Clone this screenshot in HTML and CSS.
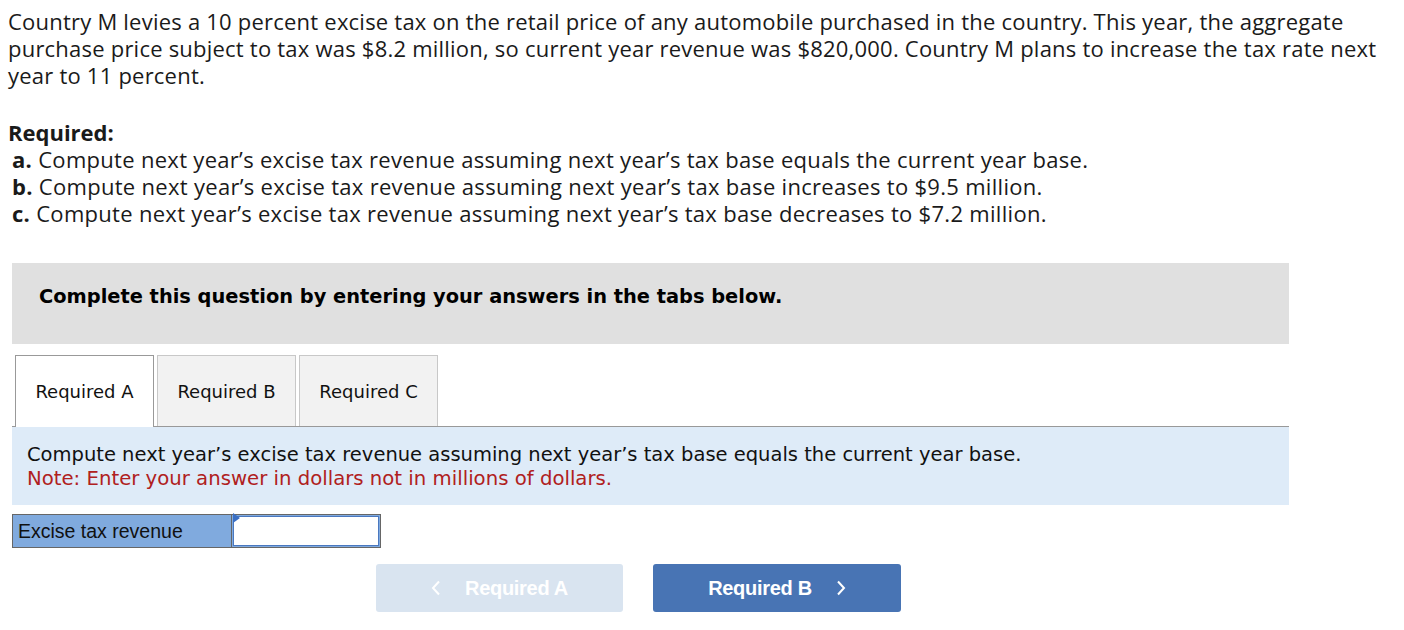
FILE: index.html
```html
<!DOCTYPE html>
<html>
  <head>
    <title>Excise Tax</title>
    <link rel="stylesheet" href="styles.css">
  </head>
  <body>
    <div class="question">
      <p class="intro">
        Country M levies a 10 percent excise tax on the retail price of any automobile purchased in the country. This year, the aggregate purchase price subject to tax was $8.2 million, so current year revenue was $820,000. Country M plans to increase the tax rate next year to 11 percent.
      </p>
      <div class="required">
        <div class="required-title">Required:</div>
        <div class="required-item"><b>a.</b> Compute next year’s excise tax revenue assuming next year’s tax base equals the current year base.</div>
        <div class="required-item"><b>b.</b> Compute next year’s excise tax revenue assuming next year’s tax base increases to $9.5 million.</div>
        <div class="required-item"><b>c.</b> Compute next year’s excise tax revenue assuming next year’s tax base decreases to $7.2 million.</div>
      </div>
    </div>

    <div class="work-area">
      <div class="instructions">Complete this question by entering your answers in the tabs below.</div>

      <div class="tabs">
        <button class="tab active" type="button">Required A</button>
        <button class="tab" type="button">Required B</button>
        <button class="tab" type="button">Required C</button>
      </div>

      <div class="tab-panel">
        <div>Compute next year’s excise tax revenue assuming next year’s tax base equals the current year base.</div>
        <div class="note">Note: Enter your answer in dollars not in millions of dollars.</div>
      </div>

      <div class="answer-row">
        <div class="answer-label">Excise tax revenue</div>
        <div class="answer-cell">
          <input class="answer-input" type="text" aria-label="Excise tax revenue">
        </div>
      </div>

      <div class="nav-buttons">
        <button class="nav-btn prev" type="button">
          <svg class="chev" width="10" height="16" viewBox="0 0 10 16"><polyline points="8,1.5 2,8 8,14.5" /></svg>
          <span>Required A</span>
        </button>
        <button class="nav-btn next" type="button">
          <span>Required B</span>
          <svg class="chev" width="10" height="16" viewBox="0 0 10 16"><polyline points="2,1.5 8,8 2,14.5" /></svg>
        </button>
      </div>
    </div>
  </body>
</html>
```

FILE: styles.css
```css
html,
body {
  margin: 0;
  padding: 0;
  background: #fff;
}
body {
  padding: 8px 0 0 8px;
  font-family: "Open Sans", Lato, Arial, sans-serif;
  color: #1a1a1a;
}
.question {
  width: 1385px;
  font-size: 22px;
  line-height: 27px;
}
.intro {
  margin: 0;
  letter-spacing: 0.22px;
}
.required {
  margin-top: 30px;
}
.required-title {
  font-weight: bold;
}
.required-item {
  padding-left: 4px;
  letter-spacing: 0.3px;
}
.work-area {
  margin-top: 36px;
  margin-left: 4px;
  width: 1277px;
  font-family: "DejaVu Sans", Verdana, sans-serif;
}
.instructions {
  background: #e0e0e0;
  height: 81px;
  box-sizing: border-box;
  padding: 22px 27px 0 27px;
  font-size: 19.4px;
  line-height: 23px;
  font-weight: bold;
  color: #000;
}
.tabs {
  display: flex;
  gap: 3px;
  margin-top: 11px;
  padding-left: 3px;
  border-bottom: 1px solid #999;
}
.tab {
  width: 139px;
  height: 71px;
  margin-bottom: -1px;
  border: 1px solid #c8c8c8;
  border-bottom: none;
  background: #f2f2f2;
  font-family: "DejaVu Sans", Verdana, sans-serif;
  font-size: 18px;
  color: #111;
  padding: 0;
  cursor: pointer;
}
.tab.active {
  background: #fff;
  border-color: #999;
  height: 72px;
}
.tab-panel {
  background: #deebf8;
  height: 78px;
  box-sizing: border-box;
  padding: 16px 15px 0 15px;
  font-size: 19.5px;
  line-height: 24px;
  color: #111;
}
.note {
  color: #b02020;
  font-size: 19.7px;
}
.answer-row {
  display: flex;
  margin-top: 9px;
  width: 369px;
  height: 34px;
  border: 1px solid #666;
  box-sizing: border-box;
  font-family: "Liberation Sans", Arial, sans-serif;
}
.answer-label {
  width: 219px;
  background: #80aade;
  border-right: 1px solid #666;
  font-size: 19.5px;
  line-height: 32px;
  padding-left: 5px;
  box-sizing: border-box;
  color: #111;
}
.answer-cell {
  flex: 1;
  position: relative;
  background: #80aade;
  padding: 1px;
}
.answer-cell::before {
  content: "";
  position: absolute;
  top: -2px;
  left: 1px;
  border-top: 5px solid transparent;
  border-bottom: 5px solid transparent;
  border-left: 7px solid #3a6fc4;
}
.answer-input {
  width: 100%;
  height: 100%;
  box-sizing: border-box;
  border: 1px solid #4a78c0;
  outline: none;
  margin: 0;
  background: #fff;
}
.nav-buttons {
  display: flex;
  gap: 30px;
  margin-top: 16px;
  padding-left: 364px;
}
.nav-btn {
  display: flex;
  align-items: center;
  justify-content: center;
  gap: 24px;
  width: 247px;
  height: 48px;
  border: none;
  border-radius: 3px;
  color: #fff;
  font-family: "Liberation Sans", Arial, sans-serif;
  font-size: 20px;
  font-weight: bold;
  letter-spacing: -0.3px;
  cursor: pointer;
}
.nav-btn .chev {
  fill: none;
  stroke: #fff;
  stroke-width: 2;
}
.prev {
  background: #d9e4f0;
}
.next {
  width: 248px;
  background: #4874b4;
}
```
